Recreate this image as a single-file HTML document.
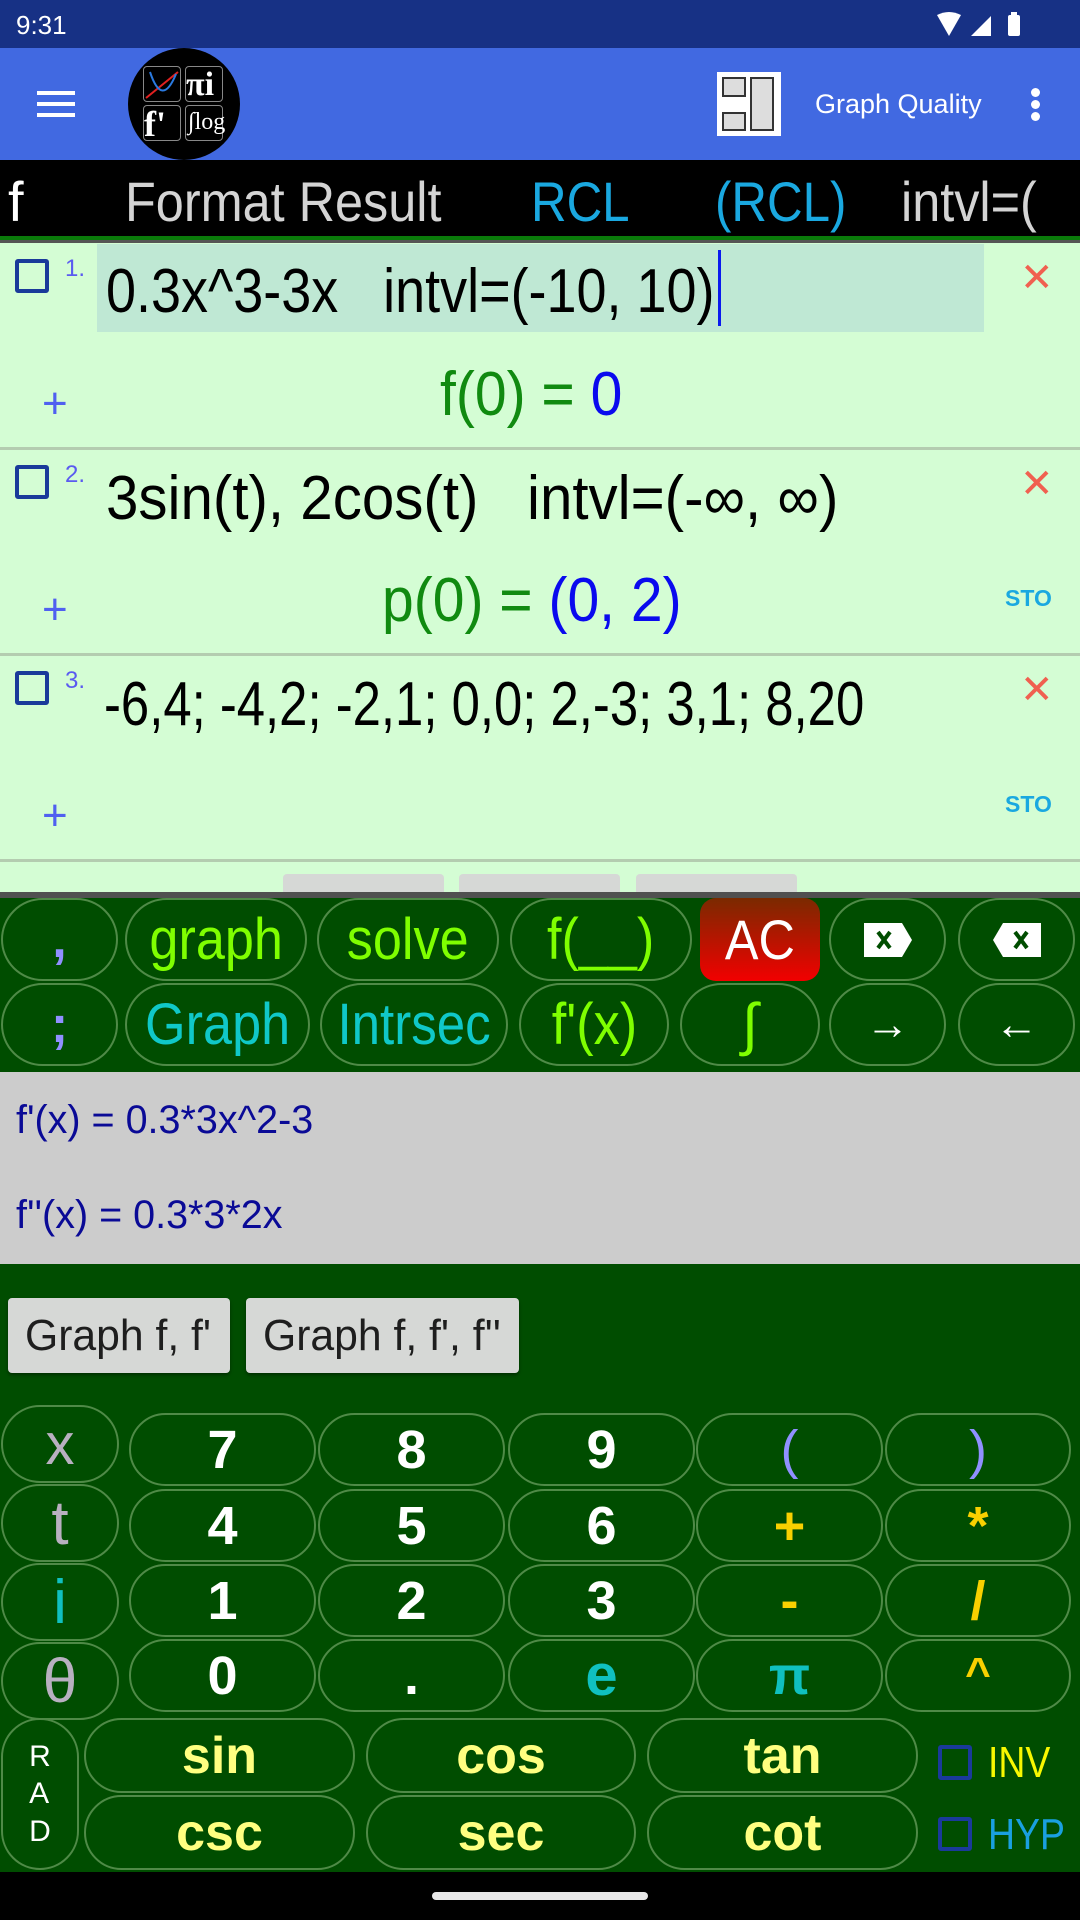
<!DOCTYPE html>
<html><head><meta charset="utf-8"><style>
*{margin:0;padding:0;box-sizing:border-box}
body{width:1080px;height:1920px;position:relative;overflow:hidden;font-family:"Liberation Sans","DejaVu Sans",sans-serif;background:#004d00}
.a{position:absolute}
.t{position:absolute;white-space:nowrap;line-height:1}
.k{position:absolute;border:2px solid #4f8a47;border-radius:44px;background:#004d00;display:flex;align-items:center;justify-content:center;white-space:nowrap}
.cb{position:absolute;width:34px;height:34px;border:4px solid #1a3a9a;border-radius:3px}
</style></head><body>
<!-- status -->
<div class="a" style="left:0;top:0;width:1080px;height:48px;background:#173185"></div>
<div class="t" style="left:16px;top:12px;font-size:26px;color:#fff">9:31</div>
<svg class="a" style="left:935px;top:12px" width="100" height="26" viewBox="0 0 100 26"><path d="M2 3 Q14 -3 26 3 L14 24Z" fill="#fff"/><path d="M36 24 L56 4 L56 24Z" fill="#fff"/><rect x="73" y="3" width="12" height="21" rx="2" fill="#fff"/><rect x="76" y="0" width="6" height="4" fill="#fff"/></svg>
<!-- appbar -->
<div class="a" style="left:0;top:48px;width:1080px;height:112px;background:#4169e1"></div>
<div class="a" style="left:37px;top:91px;width:38px;height:4px;background:#fff"></div>
<div class="a" style="left:37px;top:102px;width:38px;height:4px;background:#fff"></div>
<div class="a" style="left:37px;top:113px;width:38px;height:4px;background:#fff"></div>
<div class="a" style="left:128px;top:48px;width:112px;height:112px;border-radius:50%;background:#000;overflow:hidden">
<div class="a" style="left:15px;top:18px;width:38px;height:36px;border:1px solid #888;border-radius:4px"></div>
<div class="a" style="left:57px;top:18px;width:38px;height:36px;border:1px solid #888;border-radius:4px"></div>
<div class="a" style="left:15px;top:57px;width:38px;height:36px;border:1px solid #888;border-radius:4px"></div>
<div class="a" style="left:57px;top:57px;width:38px;height:36px;border:1px solid #888;border-radius:4px"></div>
<div class="t" style="left:58px;top:20px;font-family:'Liberation Serif',serif;font-size:34px;color:#fff;font-weight:bold">πi</div>
<div class="t" style="left:16px;top:58px;font-family:'Liberation Serif',serif;font-size:36px;color:#fff;font-weight:bold">f'</div>
<div class="t" style="left:60px;top:62px;font-family:'Liberation Serif',serif;font-size:24px;color:#fff">∫log</div>
<svg class="a" style="left:16px;top:20px" width="36" height="34"><path d="M2 30 L34 4" stroke="#e02020" stroke-width="2"/><path d="M6 4 Q18 40 32 6" stroke="#2a7ae0" fill="none" stroke-width="2"/></svg>
<div class="a" style="left:80px;top:95px;width:60px;height:18px;background:#f0a030;transform:rotate(-55deg)"></div>
</div>
<div class="a" style="left:717px;top:72px;width:64px;height:64px;background:#fff"></div>
<div class="a" style="left:722px;top:77px;width:24px;height:20px;border:2px solid #333;background:#ddd"></div>
<div class="a" style="left:722px;top:112px;width:24px;height:19px;border:2px solid #333;background:#ddd"></div>
<div class="a" style="left:750px;top:77px;width:24px;height:54px;border:2px solid #333;background:#ddd"></div>
<div class="t" style="left:815px;top:91px;font-size:27px;color:#fff">Graph Quality</div>
<div class="a" style="left:1031px;top:88px;width:9px;height:9px;border-radius:50%;background:#fff"></div>
<div class="a" style="left:1031px;top:100px;width:9px;height:9px;border-radius:50%;background:#fff"></div>
<div class="a" style="left:1031px;top:112px;width:9px;height:9px;border-radius:50%;background:#fff"></div>
<!-- black strip -->
<div class="a" style="left:0;top:160px;width:1080px;height:76px;background:#000"></div>
<div class="t" style="left:8px;top:174px;font-size:56px;color:#fff">f</div>
<div class="t" style="left:125px;top:174px;font-size:56px;color:#d4d4d4;transform:scaleX(.9);transform-origin:left">Format Result</div>
<div class="t" style="left:531px;top:174px;font-size:56px;color:#1aa8e0;transform:scaleX(.88);transform-origin:left">RCL</div>
<div class="t" style="left:715px;top:174px;font-size:56px;color:#1aa8e0;transform:scaleX(.88);transform-origin:left">(RCL)</div>
<div class="t" style="left:901px;top:174px;font-size:56px;color:#d4d4d4;transform:scaleX(.9);transform-origin:left">intvl=(</div>
<div class="a" style="left:0;top:236px;width:1080px;height:4px;background:#0a7a0a"></div>
<div class="a" style="left:0;top:240px;width:1080px;height:3px;background:#555"></div>
<!-- entries -->
<div class="a" style="left:0;top:243px;width:1080px;height:650px;background:#d4fdd4"></div>
<div class="a" style="left:0;top:447px;width:1080px;height:3px;background:#b4ccb0"></div>
<div class="a" style="left:0;top:653px;width:1080px;height:3px;background:#b4ccb0"></div>
<div class="a" style="left:0;top:859px;width:1080px;height:3px;background:#b4ccb0"></div>
<div class="a" style="left:97px;top:244px;width:887px;height:88px;background:#bfe8d4"></div>
<div class="a" style="left:718px;top:250px;width:3px;height:76px;background:#0a1aee"></div>
<div class="cb" style="left:15px;top:259px"></div>
<div class="cb" style="left:15px;top:465px"></div>
<div class="cb" style="left:15px;top:671px"></div>
<div class="t" style="left:65px;top:257px;font-size:24px;color:#5a5af0">1.</div>
<div class="t" style="left:65px;top:463px;font-size:24px;color:#5a5af0">2.</div>
<div class="t" style="left:65px;top:669px;font-size:24px;color:#5a5af0">3.</div>
<div class="t" style="left:106px;top:261px;font-size:62px;color:#000;transform:scaleX(.87);transform-origin:left">0.3x^3-3x &nbsp; intvl=(-10, 10)</div>
<div class="t" style="left:106px;top:468px;font-size:62px;color:#000;transform:scaleX(.94);transform-origin:left">3sin(t), 2cos(t) &nbsp; intvl=(-∞, ∞)</div>
<div class="t" style="left:104px;top:674px;font-size:62px;color:#000;transform:scaleX(.82);transform-origin:left">-6,4; -4,2; -2,1; 0,0; 2,-3; 3,1; 8,20</div>
<div class="t" style="left:440px;top:364px;font-size:62px;color:#108a10;transform:scaleX(.92);transform-origin:left">f(0) = <span style="color:#0a0aee">0</span></div>
<div class="t" style="left:382px;top:570px;font-size:62px;color:#108a10;transform:scaleX(.92);transform-origin:left">p(0) = <span style="color:#0a0aee">(0, 2)</span></div>
<div class="t" style="left:1020px;top:258px;font-size:40px;color:#f06050">✕</div>
<div class="t" style="left:1020px;top:464px;font-size:40px;color:#f06050">✕</div>
<div class="t" style="left:1020px;top:670px;font-size:40px;color:#f06050">✕</div>
<div class="t" style="left:42px;top:382px;font-size:44px;color:#5060f0">+</div>
<div class="t" style="left:42px;top:588px;font-size:44px;color:#5060f0">+</div>
<div class="t" style="left:42px;top:794px;font-size:44px;color:#5060f0">+</div>
<div class="t" style="left:1005px;top:587px;font-size:23px;font-weight:bold;color:#1aa8e0">STO</div>
<div class="t" style="left:1005px;top:793px;font-size:23px;font-weight:bold;color:#1aa8e0">STO</div>
<div class="a" style="left:283px;top:874px;width:161px;height:20px;background:#d6d8d6;border-radius:4px 4px 0 0"></div>
<div class="a" style="left:459px;top:874px;width:161px;height:20px;background:#d6d8d6;border-radius:4px 4px 0 0"></div>
<div class="a" style="left:636px;top:874px;width:161px;height:20px;background:#d6d8d6;border-radius:4px 4px 0 0"></div>
<div class="a" style="left:0;top:892px;width:1080px;height:6px;background:#505050"></div>
<!-- func rows -->
<div class="k" style="left:1px;top:898px;width:117px;height:83px;color:#9090ff;font-size:52px;font-weight:bold">,</div>
<div class="k" style="left:125px;top:898px;width:182px;height:83px;color:#7fff00;font-size:58px"><span style="transform:scaleX(.9)">graph</span></div>
<div class="k" style="left:317px;top:898px;width:182px;height:83px;color:#7fff00;font-size:58px"><span style="transform:scaleX(.9)">solve</span></div>
<div class="k" style="left:510px;top:898px;width:182px;height:83px;color:#7fff00;font-size:58px"><span style="transform:scaleX(.9)">f(__)</span></div>
<div class="k" style="left:700px;top:898px;width:120px;height:83px;border:none;border-radius:16px;background:linear-gradient(#7a2a00,#f20000);color:#fff;font-size:56px"><span style="transform:scaleX(.9)">AC</span></div>
<div class="k" style="left:829px;top:898px;width:117px;height:83px"><svg width="48" height="34"><path d="M0 0 H38 L48 17 L38 34 H0Z" fill="#fff"/><path d="M14 9 L26 25 M26 9 L14 25" stroke="#004d00" stroke-width="4"/></svg></div>
<div class="k" style="left:958px;top:898px;width:117px;height:83px"><svg width="48" height="34"><path d="M10 0 H48 V34 H10 L0 17Z" fill="#fff"/><path d="M22 9 L34 25 M34 9 L22 25" stroke="#004d00" stroke-width="4"/></svg></div>
<div class="k" style="left:1px;top:983px;width:117px;height:83px;color:#9090ff;font-size:52px;font-weight:bold">;</div>
<div class="k" style="left:125px;top:983px;width:185px;height:83px;color:#10c8c8;font-size:58px"><span style="transform:scaleX(.9)">Graph</span></div>
<div class="k" style="left:320px;top:983px;width:188px;height:83px;color:#10c8c8;font-size:58px"><span style="transform:scaleX(.88)">Intrsec</span></div>
<div class="k" style="left:519px;top:983px;width:150px;height:83px;color:#7fff00;font-size:58px"><span style="transform:scaleX(.9)">f'(x)</span></div>
<div class="k" style="left:680px;top:983px;width:140px;height:83px;color:#7fff00;font-size:58px">∫</div>
<div class="k" style="left:829px;top:983px;width:117px;height:83px;color:#fff;font-size:44px">→</div>
<div class="k" style="left:958px;top:983px;width:117px;height:83px;color:#fff;font-size:44px">←</div>
<!-- derivative area -->
<div class="a" style="left:0;top:1072px;width:1080px;height:192px;background:#cccccc"></div>
<div class="t" style="left:16px;top:1101px;font-size:39.5px;color:#0a0a96">f'(x) = 0.3*3x^2-3</div>
<div class="t" style="left:16px;top:1196px;font-size:39.5px;color:#0a0a96">f''(x) = 0.3*3*2x</div>
<div class="a" style="left:8px;top:1298px;width:222px;height:75px;background:#d6d8d6;border-radius:4px;box-shadow:0 2px 3px rgba(0,0,0,.4)"></div>
<div class="a" style="left:246px;top:1298px;width:273px;height:75px;background:#d6d8d6;border-radius:4px;box-shadow:0 2px 3px rgba(0,0,0,.4)"></div>
<div class="t" style="left:25px;top:1314px;font-size:44px;color:#1e1e1e;transform:scaleX(.97);transform-origin:left">Graph f, f'</div>
<div class="t" style="left:263px;top:1314px;font-size:44px;color:#1e1e1e;transform:scaleX(.97);transform-origin:left">Graph f, f', f''</div>
<!-- keypad -->
<div class="k" style="left:1px;top:1405px;width:118px;height:78px;color:#b8b0c0;font-size:58px">x</div>
<div class="k" style="left:1px;top:1484px;width:118px;height:78px;color:#b8b0c0;font-size:62px">t</div>
<div class="k" style="left:1px;top:1563px;width:118px;height:78px;color:#10c0c0;font-size:62px">i</div>
<div class="k" style="left:1px;top:1642px;width:118px;height:78px;color:#b8b0c0;font-size:62px">θ</div>

<div class="k" style="left:129px;top:1413px;width:187px;height:73px;color:#fff;font-size:54px;font-weight:bold">7</div>
<div class="k" style="left:318px;top:1413px;width:187px;height:73px;color:#fff;font-size:54px;font-weight:bold">8</div>
<div class="k" style="left:508px;top:1413px;width:187px;height:73px;color:#fff;font-size:54px;font-weight:bold">9</div>
<div class="k" style="left:696px;top:1413px;width:187px;height:73px;color:#9090ff;font-size:54px">(</div>
<div class="k" style="left:885px;top:1413px;width:186px;height:73px;color:#9090ff;font-size:54px">)</div>

<div class="k" style="left:129px;top:1489px;width:187px;height:73px;color:#fff;font-size:54px;font-weight:bold">4</div>
<div class="k" style="left:318px;top:1489px;width:187px;height:73px;color:#fff;font-size:54px;font-weight:bold">5</div>
<div class="k" style="left:508px;top:1489px;width:187px;height:73px;color:#fff;font-size:54px;font-weight:bold">6</div>
<div class="k" style="left:696px;top:1489px;width:187px;height:73px;color:#f8d000;font-size:54px;font-weight:bold">+</div>
<div class="k" style="left:885px;top:1489px;width:186px;height:73px;color:#f8d000;font-size:54px;font-weight:bold">*</div>

<div class="k" style="left:129px;top:1564px;width:187px;height:73px;color:#fff;font-size:54px;font-weight:bold">1</div>
<div class="k" style="left:318px;top:1564px;width:187px;height:73px;color:#fff;font-size:54px;font-weight:bold">2</div>
<div class="k" style="left:508px;top:1564px;width:187px;height:73px;color:#fff;font-size:54px;font-weight:bold">3</div>
<div class="k" style="left:696px;top:1564px;width:187px;height:73px;color:#f8d000;font-size:54px;font-weight:bold">-</div>
<div class="k" style="left:885px;top:1564px;width:186px;height:73px;color:#f8d000;font-size:54px;font-weight:bold">/</div>

<div class="k" style="left:129px;top:1639px;width:187px;height:73px;color:#fff;font-size:54px;font-weight:bold">0</div>
<div class="k" style="left:318px;top:1639px;width:187px;height:73px;color:#fff;font-size:54px;font-weight:bold">.</div>
<div class="k" style="left:508px;top:1639px;width:187px;height:73px;color:#10c0c0;font-size:58px;font-weight:bold">e</div>
<div class="k" style="left:696px;top:1639px;width:187px;height:73px;color:#10c0c0;font-size:54px;font-weight:bold">π</div>
<div class="k" style="left:885px;top:1639px;width:186px;height:73px;color:#f8d000;font-size:44px;font-weight:bold;align-items:flex-start;padding-top:8px">^</div>

<div class="k" style="left:1px;top:1718px;width:78px;height:152px;color:#fff;font-size:30px;flex-direction:column;line-height:1.25;border-radius:40px">R<br>A<br>D</div>
<div class="k" style="left:84px;top:1718px;width:271px;height:75px;color:#ffff80;font-size:52px;font-weight:bold">sin</div>
<div class="k" style="left:366px;top:1718px;width:270px;height:75px;color:#ffff80;font-size:52px;font-weight:bold">cos</div>
<div class="k" style="left:647px;top:1718px;width:271px;height:75px;color:#ffff80;font-size:52px;font-weight:bold">tan</div>
<div class="k" style="left:84px;top:1795px;width:271px;height:75px;color:#ffff80;font-size:52px;font-weight:bold">csc</div>
<div class="k" style="left:366px;top:1795px;width:270px;height:75px;color:#ffff80;font-size:52px;font-weight:bold">sec</div>
<div class="k" style="left:647px;top:1795px;width:271px;height:75px;color:#ffff80;font-size:52px;font-weight:bold">cot</div>
<div class="a" style="left:938px;top:1745px;width:34px;height:35px;border:4px solid #1a3a9a;border-radius:3px"></div>
<div class="a" style="left:938px;top:1817px;width:34px;height:34px;border:4px solid #1a3a9a;border-radius:3px"></div>
<div class="t" style="left:988px;top:1741px;font-size:44px;color:#f8f800;transform:scaleX(.85);transform-origin:left">INV</div>
<div class="t" style="left:988px;top:1813px;font-size:44px;color:#1aa0e0;transform:scaleX(.85);transform-origin:left">HYP</div>
<!-- nav -->
<div class="a" style="left:0;top:1872px;width:1080px;height:48px;background:#000"></div>
<div class="a" style="left:432px;top:1892px;width:216px;height:8px;border-radius:4px;background:#e8e8e8"></div>
</body></html>
